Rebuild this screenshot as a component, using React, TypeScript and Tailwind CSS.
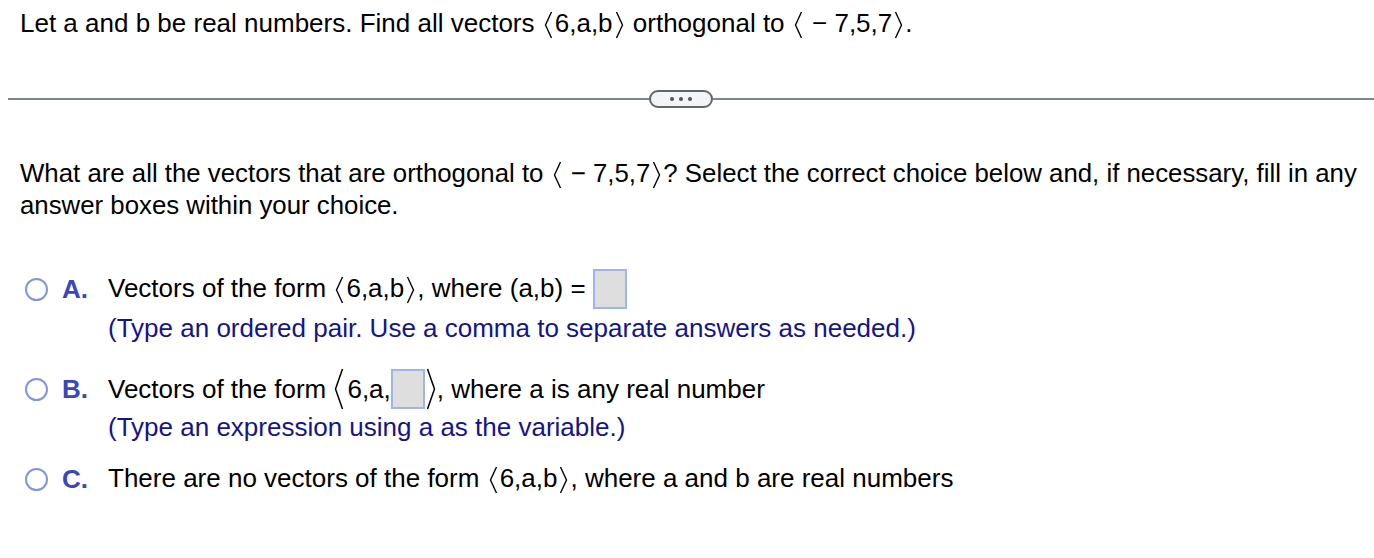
import React from "react";

function LA({ h = 28, drop = 7 }: { h?: number; drop?: number }) {
  return (
    <svg width="9" height={h} viewBox={`0 0 9 ${h}`} className="inline-block mx-[2px]" style={{ verticalAlign: `-${drop}px` }}>
      <path d={`M7.5 1 L1.5 ${h / 2} L7.5 ${h - 1}`} fill="none" stroke="#000" strokeWidth="1.4" />
    </svg>
  );
}
function RA({ h = 28, drop = 7 }: { h?: number; drop?: number }) {
  return (
    <svg width="9" height={h} viewBox={`0 0 9 ${h}`} className="inline-block mx-[2px]" style={{ verticalAlign: `-${drop}px` }}>
      <path d={`M1.5 1 L7.5 ${h / 2} L1.5 ${h - 1}`} fill="none" stroke="#000" strokeWidth="1.4" />
    </svg>
  );
}

function Radio() {
  return <span className="inline-block w-[23px] h-[23px] rounded-full border-[2.5px] border-[#8194e2] bg-white shrink-0" />;
}

function Box() {
  return <span className="inline-block w-[34px] h-[40px] border-2 border-[#a0b4e8] bg-[#dedede] shrink-0" />;
}

export default function App() {
  return (
    <div className="w-[1374px] h-[558px] bg-white text-black text-[26px] leading-none" style={{ fontFamily: "'Liberation Sans', Arial, sans-serif" }}>
      <div className="pl-[20px] h-[49px] flex items-center whitespace-pre">
        <span>Let a and b be real numbers. Find all vectors <LA />6,a,b<RA /> orthogonal to <LA /> − 7,5,7<RA />.</span>
      </div>
      <div className="relative mt-[49px] ml-[8px] h-[2px] bg-[#7d8595]">
        <div className="absolute left-[641px] top-[-8px] w-[64px] h-[18px] rounded-full border-2 border-[#5f6672] bg-[#f3f4f6] flex items-center justify-center gap-[5px]">
          <span className="w-[4px] h-[4px] rounded-full bg-[#4b5563]" />
          <span className="w-[4px] h-[4px] rounded-full bg-[#4b5563]" />
          <span className="w-[4px] h-[4px] rounded-full bg-[#4b5563]" />
        </div>
      </div>
      <div className="pl-[20px] pr-[1px] mt-[57px] leading-[32px] text-[25.8px]">
        What are all the vectors that are orthogonal to <LA /> − 7,5,7<RA />? Select the correct choice below and, if necessary, fill in any answer boxes within your choice.
      </div>
      <div className="mt-[48px] pl-[25px]">
        <div className="flex items-start">
          <div className="flex items-center h-[40px] gap-[14px]">
            <Radio />
            <span className="font-bold text-[#3747c0] w-[44px]">A.</span>
          </div>
          <div className="ml-[2px]">
            <div className="flex items-center h-[40px] whitespace-pre">
              <span>Vectors of the form <LA />6,a,b<RA />, where (a,b) = </span><Box />
            </div>
            <div className="text-[#14148c] mt-[3px] leading-[32px]">(Type an ordered pair. Use a comma to separate answers as needed.)</div>
          </div>
        </div>
        <div className="flex items-start mt-[25px]">
          <div className="flex items-center h-[40px] gap-[14px]">
            <Radio />
            <span className="font-bold text-[#3747c0] w-[44px]">B.</span>
          </div>
          <div className="ml-[2px]">
            <div className="flex items-center h-[40px] whitespace-pre">
              <span>Vectors of the form </span>
              <svg width="10" height="42" viewBox="0 0 10 42" className="ml-[1px] mr-[3px]">
                <path d="M8.5 1 L1.5 21 L8.5 41" fill="none" stroke="#000" strokeWidth="1.5" />
              </svg>
              <span>6,a,</span>
              <Box />
              <svg width="10" height="42" viewBox="0 0 10 42" className="ml-[1px] mr-[1px]">
                <path d="M1.5 1 L8.5 21 L1.5 41" fill="none" stroke="#000" strokeWidth="1.5" />
              </svg>
              <span>, where a is any real number</span>
            </div>
            <div className="text-[#14148c] mt-[2px] leading-[32px]">(Type an expression using a as the variable.)</div>
          </div>
        </div>
        <div className="flex items-start mt-[16px]">
          <div className="flex items-center h-[40px] gap-[14px]">
            <Radio />
            <span className="font-bold text-[#3747c0] w-[44px]">C.</span>
          </div>
          <div className="ml-[2px] flex items-center h-[40px] whitespace-pre">
            <span>There are no vectors of the form <LA />6,a,b<RA />, where a and b are real numbers</span>
          </div>
        </div>
      </div>
    </div>
  );
}
